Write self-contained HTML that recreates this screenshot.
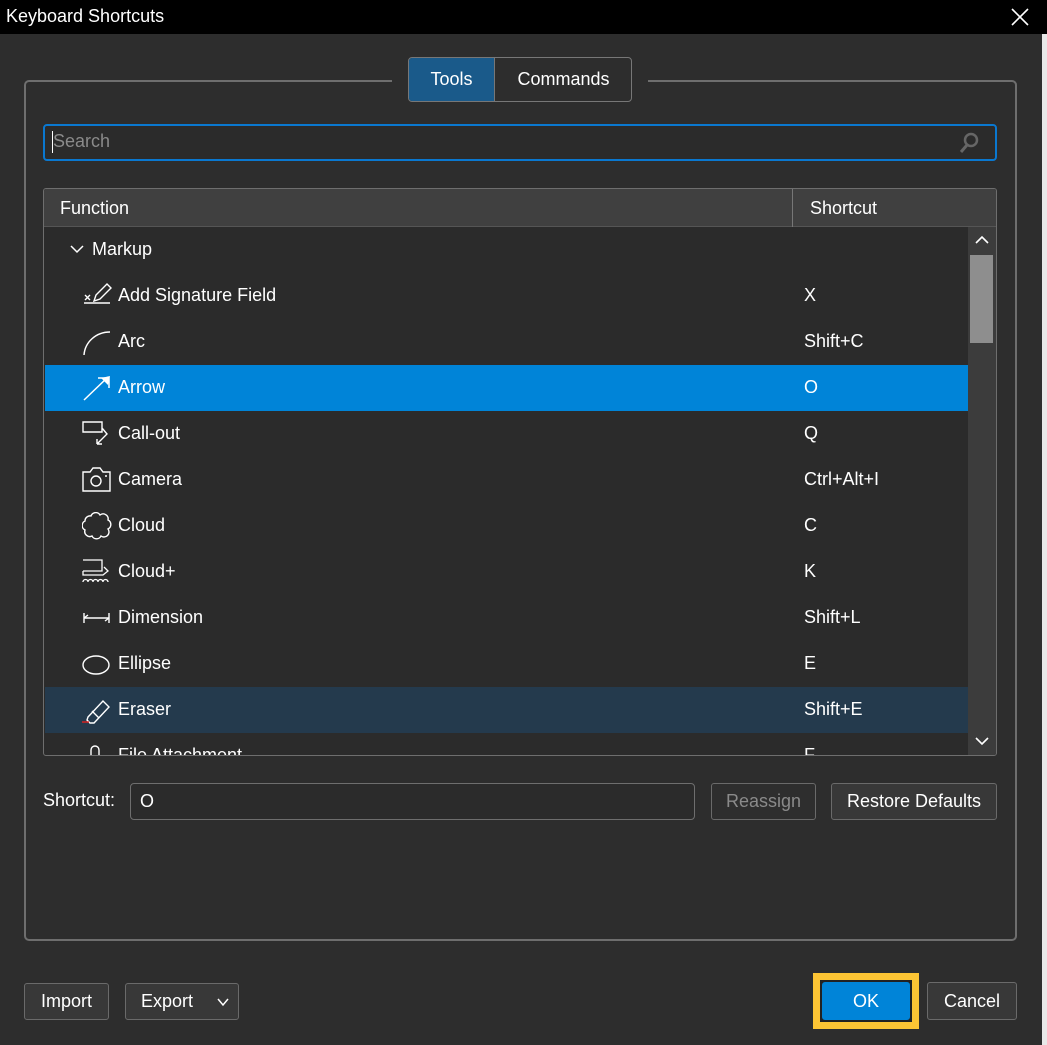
<!DOCTYPE html>
<html><head><style>
*{box-sizing:border-box;margin:0;padding:0}
body{width:1047px;height:1045px;background:#2d2d2d;font-family:"Liberation Sans",sans-serif;color:#fff;position:relative;overflow:hidden}
.a{position:absolute}
.btn{position:absolute;border:1px solid #6a6a6a;border-radius:3px;background:#383838;font-size:18px;display:flex;align-items:center;justify-content:center}
.row{position:absolute;left:45px;width:923px;height:46px;font-size:18px}
.row .t{position:absolute;left:73px;top:12px}
.row .s{position:absolute;left:759px;top:12px}
.row svg{position:absolute;left:37px;top:9px}
</style></head><body>
<div class="a" style="left:0;top:0;width:1047px;height:34px;background:#000"></div>
<div class="a" style="left:6px;top:6px;font-size:18px">Keyboard Shortcuts</div>
<svg class="a" style="left:1011px;top:8px" width="18" height="18"><path d="M1 1L17 17M17 1L1 17" stroke="#fff" stroke-width="1.6"/></svg>
<div class="a" style="left:1042px;top:34px;width:5px;height:1011px;background:#e8e8e8"></div>
<div class="a" style="left:24px;top:80px;width:993px;height:861px;border:2px solid #6e6e6e;border-radius:5px"></div>
<div class="a" style="left:392px;top:76px;width:256px;height:10px;background:#2d2d2d"></div>
<div class="a" style="left:408px;top:57px;width:224px;height:45px;border:1px solid #777;border-radius:4px;background:#2d2d2d;overflow:hidden">
<div class="a" style="left:0;top:0;width:86px;height:43px;background:#1a5a8a;border-right:1px solid #777;font-size:18px;text-align:center;line-height:43px">Tools</div>
<div class="a" style="left:86px;top:0;width:137px;height:43px;font-size:18px;text-align:center;line-height:43px">Commands</div></div>
<div class="a" style="left:43px;top:124px;width:954px;height:37px;border:2px solid #0a78d0;border-radius:4px;background:#2b2b2b"></div>
<div class="a" style="left:52px;top:131px;width:1px;height:22px;background:#fff"></div>
<div class="a" style="left:53px;top:131px;font-size:18px;color:#8a8a8a">Search</div>
<svg class="a" style="left:958px;top:131px" width="22" height="24"><circle cx="13" cy="9" r="6" fill="none" stroke="#666" stroke-width="2.5"/><path d="M9 14L3 21" stroke="#666" stroke-width="3"/></svg>
<div class="a" style="left:43px;top:188px;width:954px;height:568px;border:1px solid #6e6e6e;border-radius:3px;background:#2b2b2b;overflow:hidden">
<div class="a" style="left:0;top:0;width:954px;height:38px;background:#404040;border-bottom:1px solid #555"></div>
<div class="a" style="left:748px;top:0;width:1px;height:38px;background:#777"></div>
<div class="a" style="left:16px;top:9px;font-size:18px">Function</div>
<div class="a" style="left:766px;top:9px;font-size:18px">Shortcut</div>
<div class="a" style="left:924px;top:38px;width:29px;height:530px;background:#3c3c3c"></div>
<div class="a" style="left:926px;top:66px;width:23px;height:88px;background:#8e8e8e"></div>
<svg class="a" style="left:930px;top:46px" width="16" height="10"><path d="M2 8L8 2L14 8" stroke="#fff" fill="none" stroke-width="1.6"/></svg>
<svg class="a" style="left:930px;top:547px" width="16" height="10"><path d="M2 2L8 8L14 2" stroke="#fff" fill="none" stroke-width="1.6"/></svg>
</div>
<div class="row" style="top:227px"><svg style="left:25px;top:18px" width="14" height="10"><path d="M1 1L7 7L13 1" stroke="#fff" fill="none" stroke-width="1.5"/></svg><span class="t" style="left:47px">Markup</span></div>
<div class="row" style="top:273px"><svg width="30" height="28"><path d="M2 21h26M3 13l5 5M8 13l-5 5M12 19l2-6 11-11 4 4-11 11z" stroke="#fff" fill="none" stroke-width="1.4"/></svg><span class="t">Add Signature Field</span><span class="s">X</span></div>
<div class="row" style="top:319px"><svg width="30" height="28"><path d="M2 27C3 14 14 4 28 4" stroke="#fff" fill="none" stroke-width="1.5"/></svg><span class="t">Arc</span><span class="s">Shift+C</span></div>
<div class="row" style="top:365px;background:#0084d8"><svg width="30" height="28"><path d="M2 26L26 3M16 4h11v10" stroke="#fff" fill="none" stroke-width="1.5"/><path d="M28 2l-9 2 7 7z" fill="#fff"/></svg><span class="t">Arrow</span><span class="s">O</span></div>
<div class="row" style="top:411px"><svg width="30" height="28"><path d="M1 2h19v10H1zM20 8l5 6-10 10M15 24v-5M15 24h5" stroke="#fff" fill="none" stroke-width="1.4"/></svg><span class="t">Call-out</span><span class="s">Q</span></div>
<div class="row" style="top:457px"><svg width="30" height="28"><path d="M1 6h7l3-4h7l3 4h7v19H1z" stroke="#fff" fill="none" stroke-width="1.4"/><circle cx="14" cy="15" r="5" stroke="#fff" fill="none" stroke-width="1.4"/><circle cx="24" cy="10" r="1" fill="#fff"/></svg><span class="t">Camera</span><span class="s">Ctrl+Alt+I</span></div>
<div class="row" style="top:503px"><svg width="30" height="28"><path d="M9 4a5 5 0 0 1 9-1 5 5 0 0 1 8 5 5 5 0 0 1 0 9 5 5 0 0 1-7 7 5 5 0 0 1-9 0 5 5 0 0 1-7-6 5 5 0 0 1 0-9 5 5 0 0 1 6-5z" stroke="#fff" fill="none" stroke-width="1.4"/></svg><span class="t">Cloud</span><span class="s">C</span></div>
<div class="row" style="top:549px"><svg width="30" height="28"><path d="M1 2h19v11H1M1 13v4h20l5-4-4-4M1 24a2 2 0 0 1 5 0 2 2 0 0 1 5 0 2 2 0 0 1 5 0 2 2 0 0 1 5 0 2 2 0 0 1 5 0" stroke="#fff" fill="none" stroke-width="1.3"/></svg><span class="t">Cloud+</span><span class="s">K</span></div>
<div class="row" style="top:595px"><svg width="30" height="28"><path d="M2 14h25M2 9v10M27 9v10M2 14l4-3M27 14l-4 3" stroke="#fff" fill="none" stroke-width="1.4"/></svg><span class="t">Dimension</span><span class="s">Shift+L</span></div>
<div class="row" style="top:641px"><svg width="30" height="28"><ellipse cx="14" cy="15" rx="13" ry="9" stroke="#fff" fill="none" stroke-width="1.4"/></svg><span class="t">Ellipse</span><span class="s">E</span></div>
<div class="row" style="top:687px;background:#243a4d"><svg width="30" height="28"><path d="M6 21l15-16 6 6-15 16h-4l-3-3zM10 15l7 7" stroke="#fff" fill="none" stroke-width="1.4"/><path d="M0 26h7" stroke="#e02020" stroke-width="1.4"/></svg><span class="t">Eraser</span><span class="s">Shift+E</span></div>
<div class="row" style="top:733px;height:22px;overflow:hidden"><svg width="30" height="28"><path d="M9 26V8a4 4 0 0 1 8 0v14" stroke="#fff" fill="none" stroke-width="1.4"/></svg><span class="t">File Attachment</span><span class="s">F</span></div>
<div class="a" style="left:43px;top:790px;font-size:18px">Shortcut:</div>
<div class="a" style="left:130px;top:783px;width:565px;height:37px;border:1px solid #6e6e6e;border-radius:4px;background:#2b2b2b;font-size:18px;padding:7px 9px">O</div>
<div class="btn" style="left:711px;top:783px;width:105px;height:37px;color:#8a8a8a;background:#2e2e2e">Reassign</div>
<div class="btn" style="left:831px;top:783px;width:166px;height:37px">Restore Defaults</div>
<div class="btn" style="left:24px;top:983px;width:85px;height:37px">Import</div>
<div class="btn" style="left:125px;top:983px;width:114px;height:37px;justify-content:flex-start;padding-left:15px">Export<svg style="position:absolute;left:91px;top:13px" width="12" height="10"><path d="M1 2l5 6 5-6" stroke="#fff" fill="none" stroke-width="1.5"/></svg></div>
<div class="a" style="left:813px;top:973px;width:106px;height:56px;background:#fdc534"></div>
<div class="a" style="left:820px;top:980px;width:92px;height:42px;background:#222"></div>
<div class="btn" style="left:822px;top:982px;width:88px;height:38px;background:#0084d8;border-color:#0084d8">OK</div>
<div class="btn" style="left:927px;top:982px;width:90px;height:38px">Cancel</div>
</body></html>
